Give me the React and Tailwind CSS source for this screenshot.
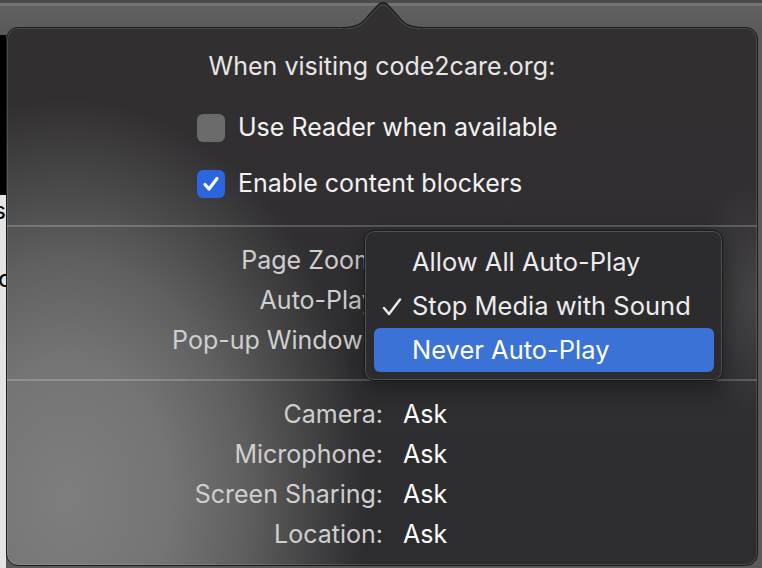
import React from "react";

const font = { fontFamily: "Inter, 'Noto Sans', sans-serif" };

const sitePerms = [
  { label: "Page Zoom:", value: "100%" },
  { label: "Auto-Play:", value: "Stop Media with Sound" },
  { label: "Pop-up Windows:", value: "Block and Notify" },
];

const devicePerms = [
  { label: "Camera:", value: "Ask" },
  { label: "Microphone:", value: "Ask" },
  { label: "Screen Sharing:", value: "Ask" },
  { label: "Location:", value: "Ask" },
];

const menuItems = [
  { label: "Allow All Auto-Play" },
  { label: "Stop Media with Sound", checked: true },
  { label: "Never Auto-Play", active: true },
];

const Checkbox = ({ checked }) =>
  checked ? (
    <span className="w-[28px] h-[28px] rounded-[6px] bg-[#2c66df] flex items-center justify-center shrink-0">
      <svg width="20" height="20" viewBox="0 0 20 20">
        <path
          d="M4 10.5 L8 15 L16 4.5"
          fill="none"
          stroke="#fff"
          strokeWidth="3.2"
          strokeLinecap="round"
          strokeLinejoin="round"
        />
      </svg>
    </span>
  ) : (
    <span className="w-[28px] h-[28px] rounded-[6px] bg-[#6b6b6b] shrink-0" />
  );

const PermRows = ({ rows }) => (
  <div className="grid grid-cols-[376px_auto] gap-x-[20px]">
    {rows.map((r) => (
      <React.Fragment key={r.label}>
        <div className="h-[40px] flex items-center justify-end text-[#cfcfcf] whitespace-nowrap">
          {r.label}
        </div>
        <div className="h-[40px] flex items-center text-white whitespace-nowrap">
          {r.value}
        </div>
      </React.Fragment>
    ))}
  </div>
);

const AutoPlayMenu = () => (
  <div className="absolute left-[357px] top-[202px] w-[359px] h-[151px] rounded-[10px] bg-[#2c2b2e] border border-[#1a1a1a] shadow-[inset_0_0_0_1px_rgba(255,255,255,0.18),0_8px_24px_rgba(0,0,0,0.35)] pt-[9px] pl-[9px] pr-[8px] text-[25.5px]">
    {menuItems.map((item) => (
      <div
        key={item.label}
        className={`h-[44px] rounded-[6px] flex items-center relative pl-[38px] whitespace-nowrap ${
          item.active ? "bg-[#3a72d5] text-white" : "text-[#ececec]"
        }`}
      >
        {item.checked && (
          <svg
            className="absolute left-[8px] top-[14px]"
            width="20"
            height="18"
            viewBox="0 0 20 18"
          >
            <path
              d="M2 10 L7 16 L18 1.5"
              fill="none"
              stroke="#ececec"
              strokeWidth="2.4"
              strokeLinecap="round"
              strokeLinejoin="round"
            />
          </svg>
        )}
        {item.label}
      </div>
    ))}
  </div>
);

export default function App() {
  return (
    <div
      className="w-[762px] h-[568px] overflow-hidden flex bg-[linear-gradient(#4c4c4c_0px,#4c4c4c_3px,#747474_3px,#747474_6px,#616161_6px,#5a5a5a_30px)]"
      style={font}
    >
      {/* page behind the popover */}
      <div className="w-[6px] shrink-0 flex flex-col pt-[35px]">
        <div className="h-[160px] bg-black" />
        <div className="flex-1 bg-[#e4e4e4] overflow-hidden flex flex-col text-[24px] text-black leading-none">
          <div className="mt-[4px] flex justify-end whitespace-nowrap">s</div>
          <div className="mt-[44px] ml-[-2px] whitespace-nowrap">c</div>
        </div>
      </div>

      {/* popover */}
      <div className="pt-[27px] relative">
        <svg
          className="absolute left-[337px] top-[2px] z-10"
          width="80"
          height="27"
          viewBox="0 0 80 27"
        >
          <path
            d="M0 27 L0 25.5 C12 25.5 18 23 25 14 L35 3 Q40 -1.5 45 3 L55 14 C62 23 68 25.5 80 25.5 L80 27 Z"
            fill="#322f31"
          />
          <path
            d="M0 25.5 C12 25.5 18 23 25 14 L35 3 Q40 -1.5 45 3 L55 14 C62 23 68 25.5 80 25.5"
            fill="none"
            stroke="#1c1c1c"
            strokeWidth="1.2"
          />
          <path
            d="M2 26.6 C13 26.6 19 24 26 15 L36 4.2 Q40 1 44 4.2 L54 15 C61 24 67 26.6 78 26.6"
            fill="none"
            stroke="rgba(255,255,255,0.12)"
            strokeWidth="1"
          />
        </svg>

        <div className="relative w-[752px] h-[539px] rounded-[12px] border border-[#1c1c1c] shadow-[inset_0_0_0_1px_rgba(255,255,255,0.12)] bg-[radial-gradient(ellipse_300px_400px_at_60px_470px,#7e7e7e_0%,#747474_35%,#5f5f5f_60%,rgba(60,59,61,0)_100%),radial-gradient(ellipse_60px_120px_at_745px_270px,rgba(255,255,255,0.1),rgba(255,255,255,0)_100%),linear-gradient(#322f31,#2f2e30_60%,#2d2c2f)] text-[25px] flex flex-col">
          {/* site options */}
          <div className="pt-[23px] pb-[13px]">
            <div className="h-[32px] flex items-center justify-center text-[#e6e6e6]">
              When visiting code2care.org:
            </div>
            <div className="mt-[17px] pl-[190px]">
              {[
                { label: "Use Reader when available", checked: false },
                { label: "Enable content blockers", checked: true },
              ].map((c) => (
                <div key={c.label} className="h-[56px] flex items-center gap-[13px] text-[#f2f2f2]">
                  <Checkbox checked={c.checked} />
                  <span>{c.label}</span>
                </div>
              ))}
            </div>
          </div>

          <div className="h-[2px] bg-white/20" />

          <div className="pt-[14px] pb-[18px]">
            <PermRows rows={sitePerms} />
          </div>

          <div className="h-[2px] bg-white/20" />

          <div className="pt-[14px]">
            <PermRows rows={devicePerms} />
          </div>

          <AutoPlayMenu />
        </div>
      </div>
    </div>
  );
}
